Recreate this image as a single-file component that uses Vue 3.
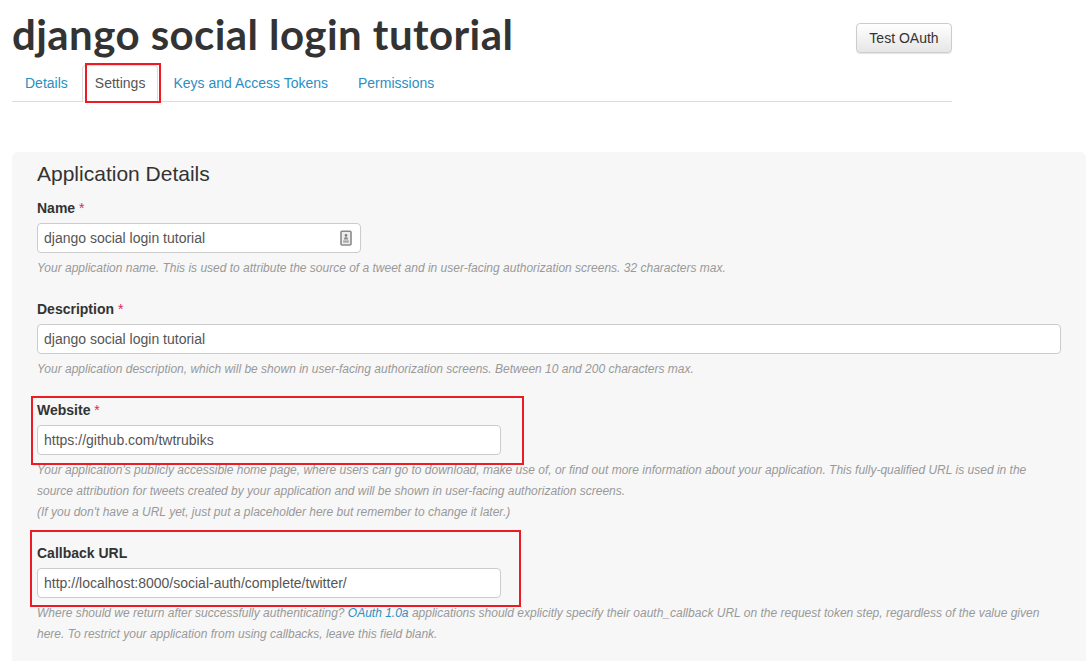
<script setup>
const fields = [
  { label: 'Name', required: true, value: 'django social login tutorial', size: 'short', icon: true,
    help: ['Your application name. This is used to attribute the source of a tweet and in user-facing authorization screens. 32 characters max.'] },
  { label: 'Description', required: true, value: 'django social login tutorial', size: 'full',
    help: ['Your application description, which will be shown in user-facing authorization screens. Between 10 and 200 characters max.'] },
  { label: 'Website', required: true, value: 'https://github.com/twtrubiks', size: 'mid',
    help: ["Your application's publicly accessible home page, where users can go to download, make use of, or find out more information about your application. This fully-qualified URL is used in the source attribution for tweets created by your application and will be shown in user-facing authorization screens.", "(If you don't have a URL yet, just put a placeholder here but remember to change it later.)"] },
]
</script>

<template>
  <div class="page">
    <header class="head">
      <h1>django social login tutorial</h1>
      <button class="btn">Test OAuth</button>
    </header>
    <nav class="tabs">
      <a class="tab first">Details</a>
      <a class="tab active">Settings</a>
      <a class="tab keys">Keys and Access Tokens</a>
      <a class="tab">Permissions</a>
    </nav>
    <section class="panel">
      <h2>Application Details</h2>
      <div v-for="f in fields" :key="f.label" class="field">
        <div class="label">{{ f.label }} <span v-if="f.required" class="req">*</span></div>
        <div class="input" :class="f.size">
          <span>{{ f.value }}</span>
          <svg v-if="f.icon" class="card" width="12" height="16" viewBox="0 0 12 16">
            <rect x="1" y="1.2" width="10" height="13.8" rx="1" fill="#ececec" stroke="#8a8a8a" stroke-width="1.6" />
            <circle cx="6" cy="5.4" r="1.3" fill="#7a7a7a" />
            <path d="M4.6 7.2h2.8l.8 2.2H3.8z" fill="#8a8a8a" />
            <rect x="3.2" y="10.4" width="5.6" height="2.2" fill="#a6a6a6" />
          </svg>
        </div>
        <p v-for="(h, i) in f.help" :key="i" class="help">{{ h }}</p>
      </div>
      <div class="field">
        <div class="label">Callback URL</div>
        <div class="input mid"><span>http://localhost:8000/social-auth/complete/twitter/</span></div>
        <p class="help">Where should we return after successfully authenticating? <a class="link">OAuth 1.0a</a> applications should explicitly specify their oauth_callback URL on the request token step, regardless of the value given here. To restrict your application from using callbacks, leave this field blank.</p>
      </div>
    </section>
    <div class="mark m-settings"></div>
    <div class="mark m-website"></div>
    <div class="mark m-callback"></div>
  </div>
</template>

<style>
html, body { margin: 0; background: #fff; overflow: hidden; }
</style>

<style scoped>
.page {
  position: relative;
  height: 661px;
  overflow: hidden;
  padding-left: 12px;
  font-family: "Liberation Sans", Arial, sans-serif;
  font-size: 14px;
  color: #333;
  box-sizing: border-box;
}
.head {
  width: 940px;
  height: 65px;
  display: flex;
  justify-content: space-between;
  align-items: flex-start;
}
h1 {
  margin: 10px 0 0;
  font-family: Lato, sans-serif;
  font-weight: 700;
  font-size: 42px;
  letter-spacing: 0.43px;
  line-height: 48px;
  color: #333;
  white-space: nowrap;
}
.btn {
  margin-top: 23px;
  width: 96px;
  height: 30px;
  padding: 0;
  border: 1px solid #ccc;
  border-radius: 4px;
  background: linear-gradient(#fff, #e6e6e6);
  box-shadow: 0 1px 1px rgba(0, 0, 0, 0.1);
  font: 14px "Liberation Sans", Arial, sans-serif;
  color: #333;
}
.tabs {
  width: 940px;
  height: 37px;
  display: flex;
  border-bottom: 1px solid #ddd;
  box-sizing: border-box;
}
.tab {
  padding: 0 12px;
  margin-right: 2px;
  line-height: 34px;
  color: #2b8fc4;
  border: 1px solid transparent;
  border-bottom: 0;
  height: 36px;
  box-sizing: border-box;
}
.tab.first { margin-right: 1px; }
.tab.keys { margin-right: 4px; }
.tab.active {
  height: 37px;
  color: #555;
  background: #fff;
  border-color: #ddd;
  border-radius: 4px 4px 0 0;
}
.panel {
  margin-top: 50px;
  width: 1074px;
  height: 520px;
  padding: 10px 25px 0;
  box-sizing: border-box;
  background: #f7f7f7;
  border-radius: 6px;
}
h2 {
  margin: 0 0 12px;
  font-size: 21px;
  font-weight: 400;
  line-height: 24px;
  color: #333;
}
.field { margin-bottom: 20px; }
.label {
  font-weight: 700;
  line-height: 20px;
  margin-bottom: 5px;
  color: #333;
}
.req { color: #e0245e; font-weight: 400; }
.input {
  height: 30px;
  box-sizing: border-box;
  border: 1px solid #ccc;
  border-radius: 4px;
  background: #fff;
  padding: 0 6px;
  line-height: 28px;
  color: #555;
  display: flex;
  align-items: center;
  justify-content: space-between;
}
.short { width: 324px; }
.mid { width: 464px; }
.full { width: 1024px; }
.card { margin-right: 2px; }
.help {
  margin: 0;
  font-size: 12px;
  font-style: italic;
  line-height: 21px;
  color: #999;
}
.input + .help { margin-top: 5px; }
.link { color: #2b8fc4; }
.mark {
  position: absolute;
  box-sizing: border-box;
  border: 2px solid #ed1c24;
  pointer-events: none;
}
.m-settings { left: 85px; top: 63px; width: 76px; height: 40px; }
.m-website { left: 31px; top: 396px; width: 493px; height: 69px; }
.m-callback { left: 30px; top: 530px; width: 491px; height: 77px; }
</style>
